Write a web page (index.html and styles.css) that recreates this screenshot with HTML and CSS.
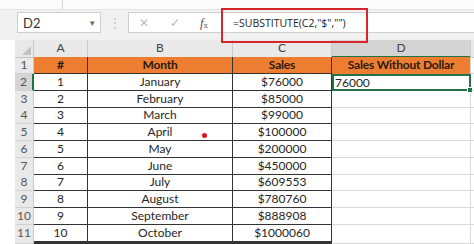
FILE: index.html
```html
<!DOCTYPE html>
<html lang="en">
  <head>
    <meta charset="UTF-8" />
    <title>Substitute</title>
    <link rel="stylesheet" href="styles.css">
  </head>
  <body>
    <div class="app">
      <div class="ribbon-edge"><span class="ribbon-divider"></span></div>

      <div class="formula-row">
        <div class="name-box">
          <span>D2</span>
          <span class="name-arrow">&#9662;</span>
        </div>
        <span class="grip">&#8942;</span>
        <div class="formula-box">
          <span class="fx-btn cancel">&#10005;</span>
          <span class="fx-btn enter">&#10003;</span>
          <span class="fx-btn fx"><i>f</i><sub>x</sub></span>
          <span class="formula-text">=SUBSTITUTE(C2,"$","")</span>
        </div>
      </div>

      <div class="sheet">
        <div class="row col-heads">
          <div class="corner"></div>
          <div class="col-head">A</div>
          <div class="col-head">B</div>
          <div class="col-head">C</div>
          <div class="col-head active">D</div>
          <div class="col-head rest"></div>
        </div>

        <div class="row">
          <div class="row-head">1</div>
          <div class="cell head">#</div>
          <div class="cell head">Month</div>
          <div class="cell head">Sales</div>
          <div class="cell head last">Sales Without Dollar</div>
          <div class="cell rest"></div>
        </div>
        <div class="row">
          <div class="row-head active">2</div>
          <div class="cell">1</div>
          <div class="cell">January</div>
          <div class="cell">$76000</div>
          <div class="cell plain selected">76000<span class="fill-handle"></span></div>
          <div class="cell rest"></div>
        </div>
        <div class="row">
          <div class="row-head">3</div>
          <div class="cell">2</div>
          <div class="cell">February</div>
          <div class="cell">$85000</div>
          <div class="cell plain"></div>
          <div class="cell rest"></div>
        </div>
        <div class="row">
          <div class="row-head">4</div>
          <div class="cell">3</div>
          <div class="cell">March</div>
          <div class="cell">$99000</div>
          <div class="cell plain"></div>
          <div class="cell rest"></div>
        </div>
        <div class="row">
          <div class="row-head">5</div>
          <div class="cell">4</div>
          <div class="cell">April</div>
          <div class="cell">$100000</div>
          <div class="cell plain"></div>
          <div class="cell rest"></div>
        </div>
        <div class="row">
          <div class="row-head">6</div>
          <div class="cell">5</div>
          <div class="cell">May</div>
          <div class="cell">$200000</div>
          <div class="cell plain"></div>
          <div class="cell rest"></div>
        </div>
        <div class="row">
          <div class="row-head">7</div>
          <div class="cell">6</div>
          <div class="cell">June</div>
          <div class="cell">$450000</div>
          <div class="cell plain"></div>
          <div class="cell rest"></div>
        </div>
        <div class="row">
          <div class="row-head">8</div>
          <div class="cell">7</div>
          <div class="cell">July</div>
          <div class="cell">$609553</div>
          <div class="cell plain"></div>
          <div class="cell rest"></div>
        </div>
        <div class="row">
          <div class="row-head">9</div>
          <div class="cell">8</div>
          <div class="cell">August</div>
          <div class="cell">$780760</div>
          <div class="cell plain"></div>
          <div class="cell rest"></div>
        </div>
        <div class="row">
          <div class="row-head">10</div>
          <div class="cell">9</div>
          <div class="cell">September</div>
          <div class="cell">$888908</div>
          <div class="cell plain"></div>
          <div class="cell rest"></div>
        </div>
        <div class="row last-row">
          <div class="row-head">11</div>
          <div class="cell">10</div>
          <div class="cell">October</div>
          <div class="cell">$1000060</div>
          <div class="cell plain"></div>
          <div class="cell rest"></div>
        </div>
      </div>

      <!-- annotations drawn over the screenshot -->
      <div class="callout"></div>
      <span class="marker-dot"></span>
    </div>
  </body>
</html>
```

FILE: styles.css
```css
* {
  margin: 0;
  padding: 0;
  box-sizing: border-box;
}

body {
  font-family: "Lato", "Open Sans", sans-serif;
  background: #ffffff;
  width: 474px;
  height: 244px;
  overflow: hidden;
}

.app {
  position: relative;
  width: 474px;
  height: 244px;
  background: #ffffff;
}

/* Ribbon edge */
.ribbon-edge {
  height: 10px;
  background: #fbfbfb;
  border-bottom: 1px solid #e4e4e4;
  padding-left: 62px;
}

.ribbon-divider {
  display: block;
  width: 1px;
  height: 9px;
  background: #d6d6d6;
}

/* Formula bar */
.formula-row {
  height: 30px;
  background: #f1f1f1;
  display: flex;
  align-items: flex-start;
  padding-top: 2px;
}

.name-box {
  margin-left: 17px;
  width: 84px;
  height: 21px;
  background: #ffffff;
  border: 1px solid #cfcfcf;
  display: flex;
  align-items: center;
  justify-content: space-between;
  padding: 0 5px 0 5px;
  font-size: 13px;
  color: #333333;
}

.name-arrow {
  font-size: 9px;
  color: #666666;
}

.grip {
  width: 27px;
  text-align: center;
  color: #c4c4c4;
  font-size: 12px;
  line-height: 21px;
}

.formula-box {
  flex: 1;
  height: 21px;
  background: #ffffff;
  border: 1px solid #cfcfcf;
  border-right: none;
  display: flex;
  align-items: center;
}

.fx-btn {
  text-align: center;
  color: #bcbcbc;
  font-size: 12px;
}

.cancel {
  width: 30px;
}

.enter {
  width: 32px;
}

.fx {
  width: 26px;
  color: #555555;
  font-family: "Liberation Serif", serif;
  font-size: 13px;
}

.fx sub {
  font-size: 9px;
  vertical-align: -1px;
}

.formula-text {
  margin-left: 16px;
  font-family: "Open Sans", sans-serif;
  font-size: 10.5px;
  color: #222222;
}

/* Sheet */
.sheet {
  padding-left: 15px;
}

.row {
  display: grid;
  grid-template-columns: 19px 54px 145px 99px 139px 1fr;
  height: 16.75px;
}

.col-heads {
  height: 17px;
}

.corner,
.col-head {
  background: #e9e9e9;
  border-right: 1px solid #cacaca;
  border-bottom: 1px solid #c4c4c4;
  font-size: 12px;
  color: #444444;
  text-align: center;
  line-height: 16px;
}

.corner {
  position: relative;
}

.corner::after {
  content: "";
  position: absolute;
  right: 2px;
  bottom: 2px;
  border-left: 9px solid transparent;
  border-bottom: 9px solid #c2c2c2;
}

.col-head.active {
  background: #d4d4d4;
  border-bottom: 2px solid #217346;
}

.col-head.rest {
  border-right: none;
}

.row-head {
  background: #e9e9e9;
  border-right: 1px solid #cacaca;
  border-bottom: 1px solid #d2d2d2;
  font-size: 12px;
  color: #555555;
  text-align: center;
  line-height: 16px;
}

.row-head.active {
  background: #d4d4d4;
  border-right: 2px solid #217346;
}

.cell {
  border-right: 1.5px solid #333333;
  border-bottom: 1.5px solid #333333;
  font-size: 12px;
  color: #262626;
  text-align: center;
  line-height: 16px;
  white-space: nowrap;
}

.cell.head {
  background: #ed7d31;
  font-weight: 700;
  color: #2a1a10;
  letter-spacing: -0.2px;
}

.cell.head.last {
  border-right: 1px solid #d4d4d4;
  border-bottom: none;
}

.cell.plain {
  border-right: 1px solid #d9d9d9;
  border-bottom: 1px solid #d9d9d9;
  text-align: left;
  padding-left: 3px;
}

.cell.rest {
  border-right: none;
  border-bottom: 1px solid #d9d9d9;
}

.cell.selected {
  position: relative;
  border: 2px solid #217346;
  padding-left: 1px;
  line-height: 13px;
}

.fill-handle {
  position: absolute;
  right: -4px;
  bottom: -4px;
  width: 6px;
  height: 6px;
  background: #217346;
  border: 1px solid #ffffff;
}

.last-row .cell {
  border-bottom-width: 3px;
}

.last-row .cell.plain,
.last-row .cell.rest {
  border-bottom-width: 1px;
}

/* Annotations */
.callout {
  position: absolute;
  left: 221px;
  top: 8px;
  width: 147px;
  height: 35px;
  border: 2px solid #d6262b;
}

.marker-dot {
  position: absolute;
  left: 202px;
  top: 133px;
  width: 5px;
  height: 5px;
  border-radius: 50%;
  background: #e3101c;
}
```
